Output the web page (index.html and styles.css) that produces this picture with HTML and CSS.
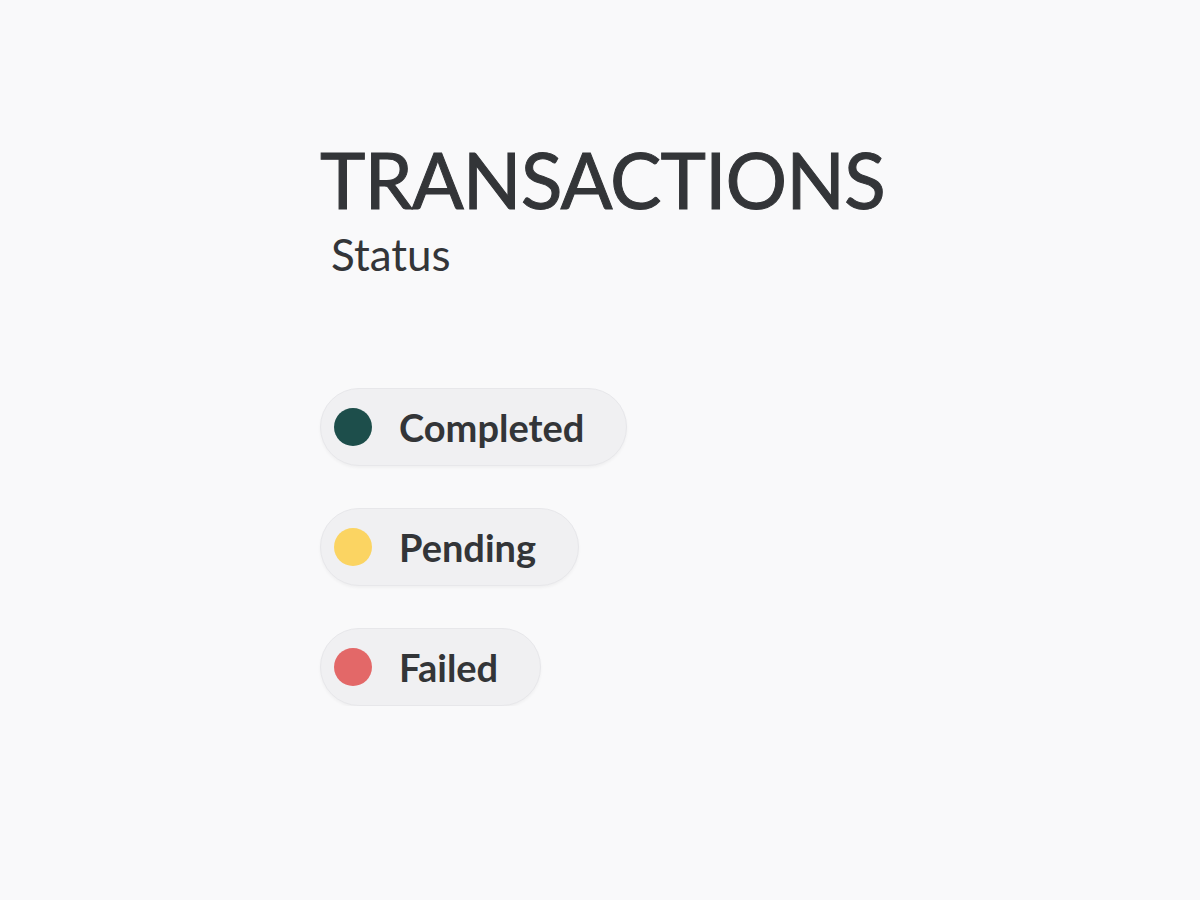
FILE: index.html
```html
<!DOCTYPE html>
<html lang="en">
	<head>
		<meta charset="UTF-8" />
		<meta name="viewport" content="width=device-width, initial-scale=1.0" />
		<title>Transactions</title>
		<link rel="stylesheet" href="styles.css">
	</head>
	<body>
		<main class="panel">
			<header class="panel-head">
				<h1 class="title">TRANSACTIONS</h1>
				<p class="subtitle">Status</p>
			</header>
			<ul class="status-list">
				<li class="status-pill">
					<span class="dot dot-completed"></span>
					<span class="label">Completed</span>
				</li>
				<li class="status-pill">
					<span class="dot dot-pending"></span>
					<span class="label">Pending</span>
				</li>
				<li class="status-pill">
					<span class="dot dot-failed"></span>
					<span class="label">Failed</span>
				</li>
			</ul>
		</main>
	</body>
</html>
```

FILE: styles.css
```css
* {
	box-sizing: border-box;
}
body {
	margin: 0;
	background: #f9f9fa;
	color: #333538;
	font-family: Lato, "Noto Sans", sans-serif;
}
.panel {
	padding: 134px 0 0 320px;
}
.title {
	margin: 0;
	font-size: 77px;
	font-weight: 400;
	line-height: 90px;
	letter-spacing: -1px;
	-webkit-text-stroke: 1px #333538;
}
.subtitle {
	margin: 6px 0 0 11px;
	font-size: 44px;
	line-height: 48px;
}
.status-list {
	list-style: none;
	margin: 110px 0 0;
	padding: 0;
	display: flex;
	flex-direction: column;
	align-items: flex-start;
	gap: 42px;
}
.status-pill {
	display: flex;
	align-items: center;
	height: 78px;
	padding: 0 42px 0 13px;
	gap: 27px;
	background: #f0f0f2;
	border: 1px solid #e7e7ea;
	border-radius: 39px;
	box-shadow: 0 2px 3px rgba(0, 0, 0, 0.04);
}
.dot {
	width: 38px;
	height: 38px;
	border-radius: 50%;
}
.dot-completed {
	background: #1d4e4b;
}
.dot-pending {
	background: #fbd462;
}
.dot-failed {
	background: #e36868;
}
.label {
	font-size: 38px;
	font-weight: 700;
}
```
